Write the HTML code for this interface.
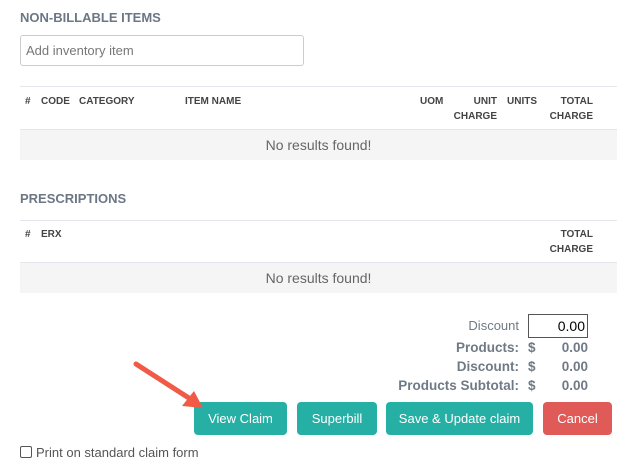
<!DOCTYPE html><html><head><style>
body{margin:0;width:637px;height:472px;background:#fff;font-family:"Liberation Sans",sans-serif;position:relative;overflow:hidden}
.a{position:absolute}
.t{font-weight:bold;font-size:13px;color:#6b7785}
.h{font-weight:bold;font-size:10px;color:#444;line-height:15px}
.line{position:absolute;left:20px;width:597px;height:1px;background:#e3e6ea}
.gray{position:absolute;left:20px;width:597px;background:#f5f5f5;text-align:center;color:#666;font-size:14px}
.btn{position:absolute;top:402px;height:33px;line-height:33px;text-align:center;color:#fff;font-size:13px;border-radius:4px;background:#26b0a5}
.r{font-weight:bold;font-size:13.5px;color:#6f7a86;text-align:right}
</style></head><body>
<div class="a t" style="left:20px;top:10px">NON-BILLABLE ITEMS</div>
<div class="a" style="left:20px;top:35px;height:29px;border:1px solid #ccc;border-radius:3px;font-size:13px;color:#777;line-height:29px;padding-left:5px;width:277px">Add inventory item</div>
<div class="line" style="top:86px"></div>
<div class="a h" style="left:25px;top:94px">#</div>
<div class="a h" style="left:41px;top:94px">CODE</div>
<div class="a h" style="left:79px;top:94px">CATEGORY</div>
<div class="a h" style="left:185px;top:94px">ITEM NAME</div>
<div class="a h" style="left:420px;top:94px">UOM</div>
<div class="a h" style="left:450px;top:94px;width:47px;text-align:right">UNIT<br>CHARGE</div>
<div class="a h" style="left:507px;top:94px">UNITS</div>
<div class="a h" style="left:545px;top:94px;width:48px;text-align:right">TOTAL<br>CHARGE</div>
<div class="line" style="top:129px"></div>
<div class="gray" style="top:130px;height:30px;line-height:30px">No results found!</div>
<div class="a t" style="left:20px;top:191px">PRESCRIPTIONS</div>
<div class="line" style="top:220px"></div>
<div class="a h" style="left:25px;top:227px">#</div>
<div class="a h" style="left:41px;top:227px">ERX</div>
<div class="a h" style="left:545px;top:227px;width:48px;text-align:right">TOTAL<br>CHARGE</div>
<div class="line" style="top:262px"></div>
<div class="gray" style="top:263px;height:30px;line-height:30px">No results found!</div>
<div class="a" style="left:440px;top:318px;width:79px;text-align:right;font-size:13px;color:#6f7a86">Discount</div>
<div class="a" style="left:528px;top:314px;height:22px;border:1px solid #555;font-size:14px;text-align:right;line-height:22px;padding-right:2px;width:56px">0.00</div>
<div class="a r" style="left:350px;top:340px;width:169px">Products:</div>
<div class="a r" style="left:350px;top:359px;width:169px">Discount:</div>
<div class="a r" style="left:350px;top:378px;width:169px">Products Subtotal:</div>
<div class="a r" style="left:528px;top:340px;text-align:left">$</div>
<div class="a r" style="left:528px;top:359px;text-align:left">$</div>
<div class="a r" style="left:528px;top:378px;text-align:left">$</div>
<div class="a r" style="left:540px;top:340px;width:48px">0.00</div>
<div class="a r" style="left:540px;top:359px;width:48px">0.00</div>
<div class="a r" style="left:540px;top:378px;width:48px">0.00</div>
<div class="btn" style="left:194px;width:93px">View Claim</div>
<div class="btn" style="left:297px;width:80px">Superbill</div>
<div class="btn" style="left:386px;width:147px">Save &amp; Update claim</div>
<div class="btn" style="left:543px;width:69px;background:#e05a58">Cancel</div>
<svg class="a" style="left:0;top:0" width="637" height="472"><line x1="136" y1="364" x2="192" y2="400" stroke="#f05a46" stroke-width="5" stroke-linecap="round"/><polygon points="203,408 182,406 194,391" fill="#f05a46"/></svg>
<div class="a" style="left:20px;top:446px;width:10px;height:10px;border:1px solid #555;border-radius:2px"></div>
<div class="a" style="left:36px;top:445px;font-size:13px;color:#555">Print on standard claim form</div>
</body></html>
